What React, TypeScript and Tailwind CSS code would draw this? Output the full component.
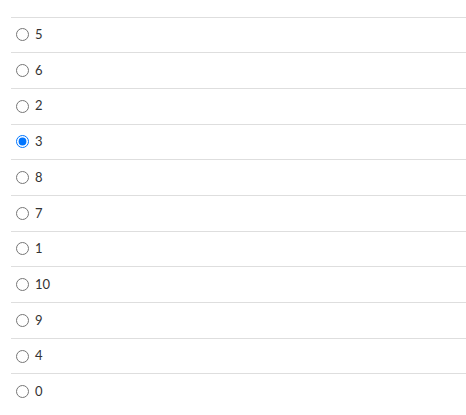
import { useState } from 'react';

const options = ['5', '6', '2', '3', '8', '7', '1', '10', '9', '4', '0'];

const App = () => {
  const [selected, setSelected] = useState<string>('3');

  return (
    <div className="pt-[16.5px] pl-[11px] font-['Lato',sans-serif] text-[13px] text-[#333]">
      {options.map((opt) => (
        <label
          key={opt}
          className="flex items-center h-[35.7px] border-t border-[#dedede] cursor-pointer"
        >
          <input
            type="radio"
            name="answer"
            value={opt}
            checked={selected === opt}
            onChange={() => setSelected(opt)}
            className="m-0 ml-[5px] mr-[6px] w-[13px] h-[13px]"
          />
          <span>{opt}</span>
        </label>
      ))}
    </div>
  );
};

export default App;
